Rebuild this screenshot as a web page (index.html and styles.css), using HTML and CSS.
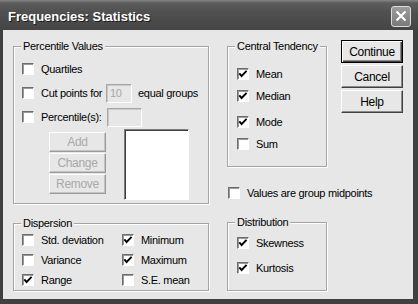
FILE: index.html
```html
<!DOCTYPE html>
<html>
<head>
<meta charset="utf-8">
<link rel="stylesheet" href="styles.css">
</head>
<body>
<div class="window">
  <div class="titlebar">
    <span class="title">Frequencies: Statistics</span>
    <span class="close"><svg width="12" height="12" viewBox="0 0 12 12"><path d="M1.5 1.5 L10.5 10.5 M10.5 1.5 L1.5 10.5" stroke="#fff" stroke-width="2.2" fill="none"/></svg></span>
  </div>
  <div class="frame">
    <div class="client">
      <div class="col col-left">
        <div class="group group-pct">
          <span class="legend">Percentile Values</span>
          <div class="pct-rows">
            <div class="row"><span class="cb"></span><span>Quartiles</span></div>
            <div class="row"><span class="cb"></span><span class="lbl-cut">Cut points for</span><span class="field f-cut">10</span><span>equal groups</span></div>
            <div class="row"><span class="cb"></span><span class="lbl-pct">Percentile(s):</span><span class="field f-pct"></span></div>
          </div>
          <div class="pct-bottom">
            <div class="btn-stack">
              <span class="btn disabled">Add</span>
              <span class="btn disabled">Change</span>
              <span class="btn disabled">Remove</span>
            </div>
            <div class="listbox"></div>
          </div>
        </div>
        <div class="group group-disp">
          <span class="legend">Dispersion</span>
          <div class="grid2">
            <div class="item"><span class="cb"></span><span>Std. deviation</span></div>
            <div class="item"><span class="cb checked"><svg width="10" height="10" viewBox="0 0 10 10"><path d="M1.3 4.3 L3.6 7 L8.6 1.8" stroke="#000" stroke-width="1.9" fill="none"/></svg></span><span>Minimum</span></div>
            <div class="item"><span class="cb"></span><span>Variance</span></div>
            <div class="item"><span class="cb checked"><svg width="10" height="10" viewBox="0 0 10 10"><path d="M1.3 4.3 L3.6 7 L8.6 1.8" stroke="#000" stroke-width="1.9" fill="none"/></svg></span><span>Maximum</span></div>
            <div class="item"><span class="cb checked"><svg width="10" height="10" viewBox="0 0 10 10"><path d="M1.3 4.3 L3.6 7 L8.6 1.8" stroke="#000" stroke-width="1.9" fill="none"/></svg></span><span>Range</span></div>
            <div class="item"><span class="cb"></span><span>S.E. mean</span></div>
          </div>
        </div>
      </div>
      <div class="col col-mid">
        <div class="group group-ct">
          <span class="legend">Central Tendency</span>
          <div class="ct-rows">
            <div class="row row-mid"><span class="cb checked"><svg width="10" height="10" viewBox="0 0 10 10"><path d="M1.3 4.3 L3.6 7 L8.6 1.8" stroke="#000" stroke-width="1.9" fill="none"/></svg></span><span>Mean</span></div>
            <div class="row row-mid"><span class="cb checked"><svg width="10" height="10" viewBox="0 0 10 10"><path d="M1.3 4.3 L3.6 7 L8.6 1.8" stroke="#000" stroke-width="1.9" fill="none"/></svg></span><span>Median</span></div>
            <div class="row row-mid row-mode"><span class="cb checked"><svg width="10" height="10" viewBox="0 0 10 10"><path d="M1.3 4.3 L3.6 7 L8.6 1.8" stroke="#000" stroke-width="1.9" fill="none"/></svg></span><span>Mode</span></div>
            <div class="row row-mid"><span class="cb"></span><span>Sum</span></div>
          </div>
        </div>
        <div class="values-row"><span class="cb"></span><span class="nowrap">Values are group midpoints</span></div>
        <div class="group group-dist">
          <span class="legend">Distribution</span>
          <div class="dist-rows">
            <div class="row row-dist"><span class="cb checked"><svg width="10" height="10" viewBox="0 0 10 10"><path d="M1.3 4.3 L3.6 7 L8.6 1.8" stroke="#000" stroke-width="1.9" fill="none"/></svg></span><span>Skewness</span></div>
            <div class="row row-dist"><span class="cb checked"><svg width="10" height="10" viewBox="0 0 10 10"><path d="M1.3 4.3 L3.6 7 L8.6 1.8" stroke="#000" stroke-width="1.9" fill="none"/></svg></span><span>Kurtosis</span></div>
          </div>
        </div>
      </div>
      <div class="col col-btns">
        <span class="btn btn-default">Continue</span>
        <span class="btn">Cancel</span>
        <span class="btn">Help</span>
      </div>
    </div>
  </div>
</div>
</body>
</html>
```

FILE: styles.css
```css
* { box-sizing: border-box; }
body {
  margin: 0;
  font-family: "Liberation Sans", Arial, sans-serif;
  font-size: 11px;
  letter-spacing: -0.3px;
  color: #000;
  background: #e7e7e7;
}
.window {
  width: 418px;
  height: 304px;
  display: flex;
  flex-direction: column;
  background: #e7e7e7;
  overflow: hidden;
}
.titlebar {
  height: 30px;
  flex: none;
  display: flex;
  align-items: center;
  justify-content: space-between;
  padding: 0 7px 0 8px;
  background: linear-gradient(#858585 0, #5c5c5c 3px, #505050 40%, #454545 100%);
}
.title {
  color: #fff;
  font-weight: bold;
  font-size: 13px;
  letter-spacing: 0;
  text-shadow: 1px 1px 0 #1c1c1c;
  margin-top: 2px;
}
.close {
  width: 20px;
  height: 21px;
  margin-top: 2px;
  border: 1px solid #dcdcdc;
  border-radius: 3px;
  background: linear-gradient(#9c9c9c, #7a7a7a);
  display: flex;
  align-items: center;
  justify-content: center;
}
.frame {
  flex: 1;
  border-left: 3px solid #404040;
  border-right: 5px solid #404040;
  border-bottom: 5px solid #404040;
  background: #e7e7e7;
}
.client {
  display: flex;
  padding: 10px 0 0 10px;
}
.col { display: flex; flex-direction: column; }
.col-left { width: 196px; }
.col-mid { width: 100px; margin-left: 18px; }
.col-btns { width: 62px; margin-left: 14px; gap: 2px; }

.group {
  border: 1px solid #a4a4a4;
  box-shadow: inset 1px 1px 0 #fff, 1px 1px 0 #fff;
}
.legend {
  display: table;
  margin: -7px 0 0 7px;
  padding: 0 2px;
  height: 13px;
  line-height: 13px;
  background: #e7e7e7;
  white-space: nowrap;
}
.group-pct { margin-top: 6px; padding-bottom: 3px; }
.pct-rows { margin-top: 4px; }
.row {
  display: flex;
  align-items: center;
  height: 24px;
  padding-left: 8px;
  white-space: nowrap;
}
.cb {
  flex: none;
  width: 12px;
  height: 12px;
  margin-right: 7px;
  background: #fff;
  border: 1px solid;
  border-color: #6e6e6e #fff #fff #6e6e6e;
  box-shadow: inset 1px 1px 0 #9a9a9a;
  display: flex;
  align-items: center;
  justify-content: center;
}
.cb svg { display: block; }
.lbl-cut { width: 65px; }
.lbl-pct { width: 66px; }
.field {
  height: 19px;
  border: 1px solid;
  border-color: #a8a8a8 #fff #fff #a8a8a8;
  box-shadow: inset 1px 1px 0 #c8c8c8;
  color: #a6a6a6;
  padding-left: 3px;
  line-height: 17px;
}
.f-cut { width: 26px; margin-right: 6px; }
.f-pct { width: 35px; }

.pct-bottom {
  display: flex;
  height: 71px;
  padding-left: 35px;
  gap: 18px;
}
.btn-stack {
  width: 57px;
  padding-top: 3px;
  display: flex;
  flex-direction: column;
  gap: 1px;
}
.btn {
  display: flex;
  align-items: center;
  justify-content: center;
  height: 23px;
  border: 1px solid;
  border-color: #fff #404040 #404040 #fff;
  box-shadow: inset -1px -1px 0 #8a8a8a;
  background: #e7e7e7;
  font-size: 12px;
}
.btn.disabled {
  height: 20px;
  color: #a9a9a9;
  border-color: #fff #9a9a9a #9a9a9a #fff;
  box-shadow: inset -1px -1px 0 #c4c4c4;
}
.btn-default {
  border: 1px solid #000;
  box-shadow: inset 1px 1px 0 #fff, inset -1px -1px 0 #404040, inset -2px -2px 0 #8a8a8a;
}
.listbox {
  width: 65px;
  height: 71px;
  background: #fff;
  border: 1px solid;
  border-color: #7c7c7c #fff #fff #7c7c7c;
  box-shadow: inset 1px 1px 0 #404040;
}

.group-disp { margin-top: 19px; }
.grid2 {
  display: grid;
  grid-template-columns: 100px 1fr;
  grid-auto-rows: 20px;
  padding-left: 8px;
}
.item {
  display: flex;
  align-items: center;
  white-space: nowrap;
}

.group-ct { margin-top: 6px; padding-bottom: 11px; }
.ct-rows { margin-top: 10px; }
.row-mid { height: 22px; padding-left: 9px; }
.row-mode { margin-top: 4px; }

.values-row {
  margin-top: 19px;
  height: 13px;
  display: flex;
  align-items: center;
  padding-left: 1px;
  white-space: nowrap;
}
.nowrap { white-space: nowrap; }

.group-dist { margin-top: 23px; padding-bottom: 10px; }
.dist-rows { margin-top: 1px; }
.row-dist { height: 25px; padding-left: 9px; }
```
